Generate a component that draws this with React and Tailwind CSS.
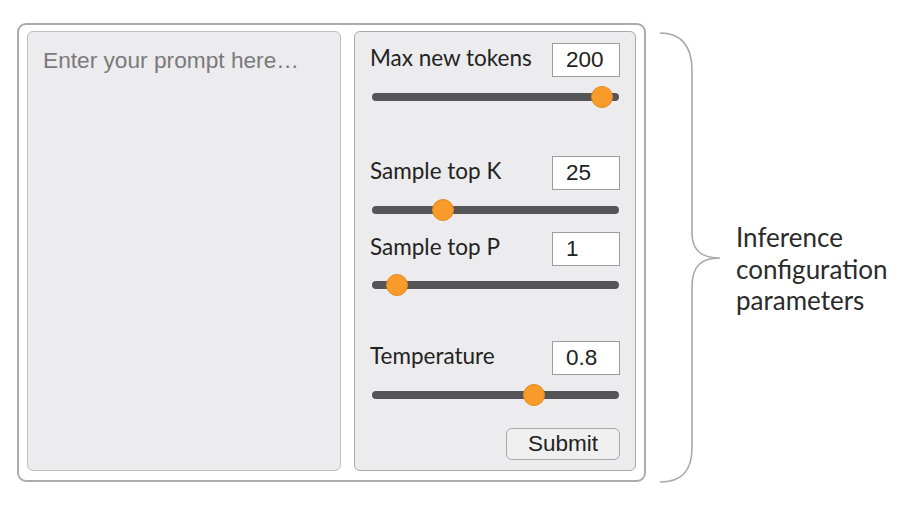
const params = [
  { label: 'Max new tokens', value: '200', thumb: 'left-[219px]', rowMt: 'mt-[11px]', sliderMt: 'mt-[8px]' },
  { label: 'Sample top K', value: '25', thumb: 'left-[60px]', rowMt: 'mt-[47px]', sliderMt: 'mt-[8px]' },
  { label: 'Sample top P', value: '1', thumb: 'left-[14px]', rowMt: 'mt-[10px]', sliderMt: 'mt-[7px]' },
  { label: 'Temperature', value: '0.8', thumb: 'left-[151px]', rowMt: 'mt-[44px]', sliderMt: 'mt-[8px]' },
]

function Slider({ thumb, className }) {
  return (
    <div className={`relative h-[24px] ml-[2px] w-[247px] flex items-center ${className}`}>
      <div className="h-[8px] w-full rounded-full bg-[#555557]" />
      <div className={`absolute top-[1px] ${thumb} w-[22px] h-[22px] rounded-full bg-[#f99b2a] border border-[#e48a1c]`} />
    </div>
  )
}

export default function App() {
  return (
    <div className="w-[901px] h-[511px] bg-white flex pt-[23px] pl-[17px] font-['Liberation_Sans',Arial,sans-serif]">
      <div className="w-[629px] h-[459px] shrink-0 border-2 border-[#ababab] rounded-[9px] flex gap-[13px] px-[8px] pt-[6px] pb-[9px]">
        <div className="w-[314px] shrink-0 h-full bg-[#ecebed] border border-[#bdbdbd] rounded-[6px] pl-[15px] pt-[14px]">
          <p className="text-[22.7px] leading-[28px] text-[#7a7a7c]">Enter your prompt here…</p>
        </div>

        <div className="w-[282px] shrink-0 h-full bg-[#ecebed] border border-[#a9a9a9] rounded-[6px] pl-[15px] pr-[15px] flex flex-col">
          {params.map(p => (
            <div key={p.label}>
              <div className={`flex items-center justify-between ${p.rowMt}`}>
                <span className="font-['Lato','Noto_Sans',sans-serif] text-[22.5px] text-[#222] -mt-[4px]">{p.label}</span>
                <div className="w-[68px] h-[34px] bg-white border border-[#9c9c9c] pl-[13px] flex items-center text-[22.5px] text-[#222]">
                  {p.value}
                </div>
              </div>
              <Slider thumb={p.thumb} className={p.sliderMt} />
            </div>
          ))}
          <div className="flex justify-end mt-[21px]">
            <button className="w-[114px] h-[32px] rounded-[6px] border border-[#a8a8a8] bg-[#efeff0] text-[22.5px] text-[#222] flex items-center justify-center">
              Submit
            </button>
          </div>
        </div>
      </div>

      <svg className="ml-[4px] shrink-0" width="76" height="462" viewBox="0 0 76 462" fill="none">
        <path
          d="M10 10 C30 10 42 22 42 47 L42 210 C42 228 52 235 70 235 C52 235 42 242 42 264 L42 425 C42 450 30 459 10 459"
          stroke="#a9a9a9"
          strokeWidth="1.6"
        />
      </svg>

      <div className="ml-[10px] mt-[199px] font-['Lato','Noto_Sans',sans-serif] text-[26px] leading-[31.5px] text-[#2b2b2b] whitespace-nowrap">
        <div>Inference</div>
        <div>configuration</div>
        <div>parameters</div>
      </div>
    </div>
  )
}
